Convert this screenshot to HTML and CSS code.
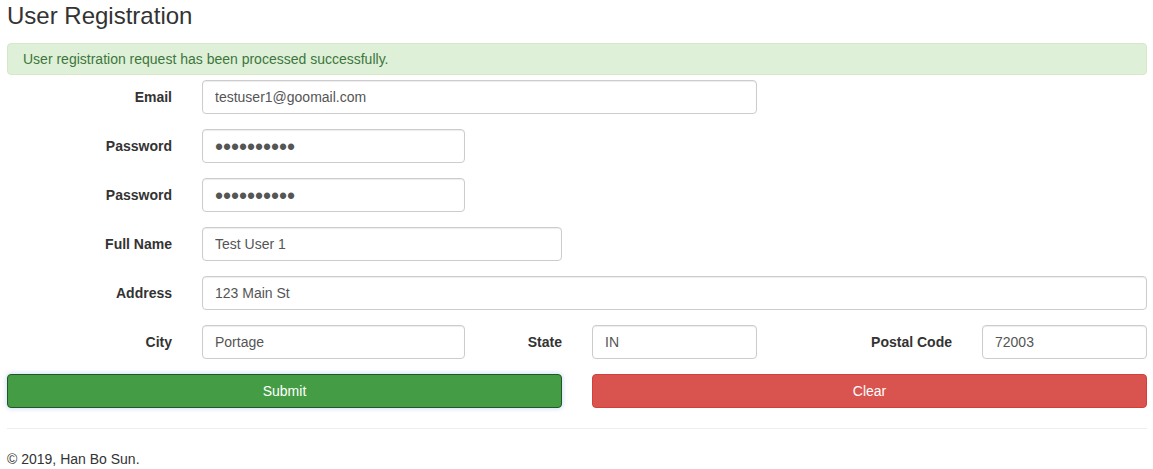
FILE: index.html
```html
<!DOCTYPE html>
<html lang="en">
<head>
<meta charset="utf-8">
<title>User Registration</title>
<link rel="stylesheet" href="styles.css">
</head>
<body>
<div class="page">
  <h3 class="title">User Registration</h3>
  <div class="alert">User registration request has been processed successfully.</div>
  <form class="form">
    <div class="row">
      <label class="label span-2">Email</label>
      <input class="control span-6" type="text" value="testuser1@goomail.com">
    </div>
    <div class="row">
      <label class="label span-2">Password</label>
      <input class="control control-password span-3" type="password" value="abcdefghij">
    </div>
    <div class="row">
      <label class="label span-2">Password</label>
      <input class="control control-password span-3" type="password" value="abcdefghij">
    </div>
    <div class="row">
      <label class="label span-2">Full Name</label>
      <input class="control span-4" type="text" value="Test User 1">
    </div>
    <div class="row">
      <label class="label span-2">Address</label>
      <input class="control span-10" type="text" value="123 Main St">
    </div>
    <div class="row">
      <label class="label span-2">City</label>
      <input class="control span-3" type="text" value="Portage">
      <label class="label span-1">State</label>
      <input class="control span-2" type="text" value="IN">
      <label class="label span-2">Postal Code</label>
      <input class="control span-2" type="text" value="72003">
    </div>
    <div class="row row-buttons">
      <button type="button" class="btn btn-submit span-6">Submit</button>
      <button type="button" class="btn btn-clear span-6">Clear</button>
    </div>
  </form>
  <hr class="divider">
  <footer class="footer">© 2019, Han Bo Sun.</footer>
</div>
</body>
</html>
```

FILE: styles.css
```css
html, body {
  margin: 0;
  padding: 0;
  background: #fff;
}

body {
  font-family: "Liberation Sans", Arial, Helvetica, sans-serif;
  font-size: 14px;
  line-height: 20px;
  color: #333;
}

.page {
  padding: 3px 6px 0 7px;
}

.title {
  margin: 0;
  font-size: 24px;
  line-height: 26.4px;
  font-weight: 500;
  color: #333;
}

.alert {
  margin: 13.6px 0 5px 0;
  padding: 5px 15px;
  background: #dff0d8;
  border: 1px solid #d6e9c6;
  border-radius: 4px;
  color: #3c763d;
}

.form {
  margin: 0;
}

.row {
  display: grid;
  grid-template-columns: repeat(12, 1fr);
  column-gap: 30px;
  margin-bottom: 15px;
}

.row-buttons {
  margin-bottom: 20px;
}

.span-1 { grid-column: span 1; }
.span-2 { grid-column: span 2; }
.span-3 { grid-column: span 3; }
.span-4 { grid-column: span 4; }
.span-6 { grid-column: span 6; }
.span-10 { grid-column: span 10; }

.label {
  padding-top: 7px;
  text-align: right;
  font-weight: bold;
  color: #333;
  white-space: nowrap;
}

.control {
  box-sizing: border-box;
  height: 34px;
  width: 100%;
  margin: 0;
  padding: 6px 12px;
  font-family: "Liberation Sans", Arial, Helvetica, sans-serif;
  font-size: 14px;
  line-height: 20px;
  color: #555;
  background: #fff;
  border: 1px solid #ccc;
  border-radius: 4px;
  box-shadow: inset 0 1px 1px rgba(0, 0, 0, 0.075);
  outline: none;
}

.control-password {
  font-size: 23px;
  letter-spacing: -0.05px;
  padding-left: 12px;
  padding-top: 7px;
  padding-bottom: 5px;
}

.btn {
  box-sizing: border-box;
  height: 34px;
  width: 100%;
  margin: 0;
  padding: 6px 12px;
  font-family: "Liberation Sans", Arial, Helvetica, sans-serif;
  font-size: 14px;
  line-height: 20px;
  color: #fff;
  border: 1px solid transparent;
  border-radius: 4px;
  cursor: pointer;
}

.btn-submit {
  background: #449d44;
  border-color: #255625;
  box-shadow: 0 0 4px 1px rgba(120, 170, 230, 0.35);
}

.btn-clear {
  background: #d9534f;
  border-color: #d43f3a;
}

.divider {
  margin: 0 0 20px 0;
  border: 0;
  border-top: 1px solid #eee;
  height: 0;
}

.footer {
  color: #333;
}
```
